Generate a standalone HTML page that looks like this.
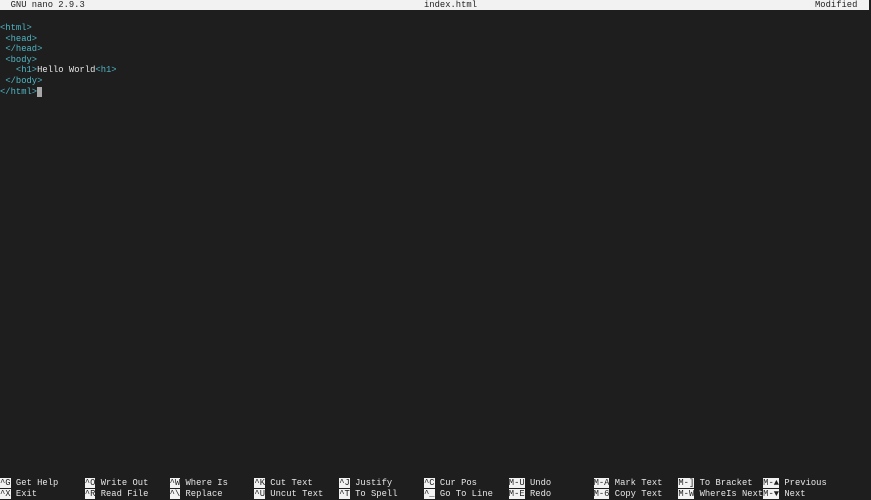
<!DOCTYPE html>
<html><head><meta charset="utf-8"><style>
html,body{margin:0;padding:0;background:#1e1e1e;width:871px;height:500px;overflow:hidden}
.t{position:absolute;left:0;font-family:"Liberation Mono",monospace;font-size:8.8px;letter-spacing:0.02px;line-height:10.6px;height:10.6px;white-space:pre;color:#e6e6e6;padding-top:1px}
.bar{background:#f2f2f2;color:#1e1e1e;width:869px;top:0;height:10px;padding-top:0}
.c{color:#4fb6c4}
.k{background:#f2f2f2;color:#1e1e1e}
.cur{background:#a8a8a8;color:#a8a8a8}
</style></head><body>
<div class="t bar">  GNU nano 2.9.3</div>
<div class="t" style="top:0;left:424px;color:#1e1e1e;padding-top:0">index.html</div>
<div class="t" style="top:0;left:815px;color:#1e1e1e;padding-top:0">Modified</div>
<div class="t" style="top:22px"><span class="c">&lt;html&gt;</span></div>
<div class="t" style="top:32.6px"> <span class="c">&lt;head&gt;</span></div>
<div class="t" style="top:43.2px"> <span class="c">&lt;/head&gt;</span></div>
<div class="t" style="top:53.8px"> <span class="c">&lt;body&gt;</span></div>
<div class="t" style="top:64.4px">   <span class="c">&lt;h1&gt;</span>Hello World<span class="c">&lt;h1&gt;</span></div>
<div class="t" style="top:75px"> <span class="c">&lt;/body&gt;</span></div>
<div class="t" style="top:85.6px"><span class="c">&lt;/html&gt;</span><span class="cur"> </span></div>
<div class="t" style="top:477px"><span class="k">^G</span> Get Help     <span class="k">^O</span> Write Out    <span class="k">^W</span> Where Is     <span class="k">^K</span> Cut Text     <span class="k">^J</span> Justify      <span class="k">^C</span> Cur Pos      <span class="k">M-U</span> Undo        <span class="k">M-A</span> Mark Text   <span class="k">M-]</span> To Bracket  <span class="k">M-▲</span> Previous</div>
<div class="t" style="top:487.6px"><span class="k">^X</span> Exit         <span class="k">^R</span> Read File    <span class="k">^\</span> Replace      <span class="k">^U</span> Uncut Text   <span class="k">^T</span> To Spell     <span class="k">^_</span> Go To Line   <span class="k">M-E</span> Redo        <span class="k">M-6</span> Copy Text   <span class="k">M-W</span> WhereIs Next<span class="k">M-▼</span> Next</div>
</body></html>
